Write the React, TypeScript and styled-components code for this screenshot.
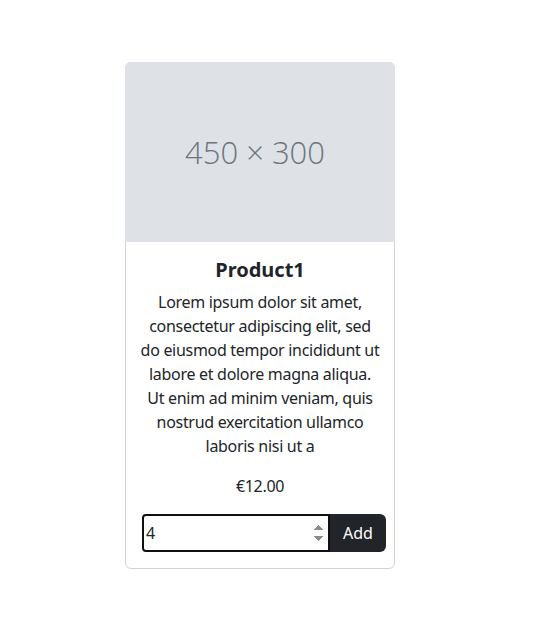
import React from "react";
import styled, { createGlobalStyle } from "styled-components";

const GlobalStyle = createGlobalStyle`
  * { box-sizing: border-box; }
  body {
    margin: 0;
    background: #fff;
    font-family: "Segoe UI", "Noto Sans", "Liberation Sans", sans-serif;
    color: #212529;
  }
`;

const Page = styled.div`
  padding: 62px 0 40px 125px;
`;

const StyledCard = styled.div`
  width: 270px;
  border: 1px solid rgba(0, 0, 0, 0.175);
  border-radius: 6px;
  display: flex;
  flex-direction: column;
`;

const Placeholder = styled.div`
  height: 180px;
  background: #dee2e6;
  display: flex;
  align-items: center;
  justify-content: center;
  color: #6c757d;
  font-family: "Open Sans", "Noto Sans", sans-serif;
  font-size: 31px;
  font-weight: 300;
  padding-right: 10px;
  margin: -1px -1px 0;
  border-radius: 6px 6px 0 0;
`;

const Body = styled.div`
  padding: 16px;
  text-align: center;
`;

const Title = styled.h5`
  margin: 0 0 8px;
  font-size: 20px;
  font-weight: 700;
  line-height: 24px;
`;

const Text = styled.p`
  margin: 0 -3px 16px;
  font-size: 16px;
  line-height: 24px;
  letter-spacing: -0.3px;
`;

const InputGroup = styled.div`
  display: flex;
  height: 38px;
  width: 244px;
`;

const QtyInput = styled.input`
  width: 188px;
  border: 2px solid #101010;
  border-radius: 4px 0 0 4px;
  padding: 0 2px;
  font-family: inherit;
  font-size: 16px;
  color: #212529;
  outline: none;
`;

const AddButton = styled.button`
  width: 56px;
  background: #212529;
  color: #fff;
  border: none;
  border-radius: 0 6px 6px 0;
  padding: 0;
  font-family: inherit;
  font-size: 16px;
  cursor: pointer;
`;

interface Props {
  title: string;
  description: string;
  price: string;
}

const Card = ({ title, description, price }: Props) => {
  return (
    <StyledCard>
      <Placeholder>450 × 300</Placeholder>
      <Body>
        <Title>{title}</Title>
        <Text>{description}</Text>
        <Text>{price}</Text>
        <InputGroup>
          <QtyInput type="number" defaultValue={4} autoFocus />
          <AddButton>Add</AddButton>
        </InputGroup>
      </Body>
    </StyledCard>
  );
};

export default function App() {
  return (
    <>
      <GlobalStyle />
      <Page>
        <Card
          title="Product1"
          description="Lorem ipsum dolor sit amet, consectetur adipiscing elit, sed do eiusmod tempor incididunt ut labore et dolore magna aliqua. Ut enim ad minim veniam, quis nostrud exercitation ullamco laboris nisi ut a"
          price="€12.00"
        />
      </Page>
    </>
  );
}
